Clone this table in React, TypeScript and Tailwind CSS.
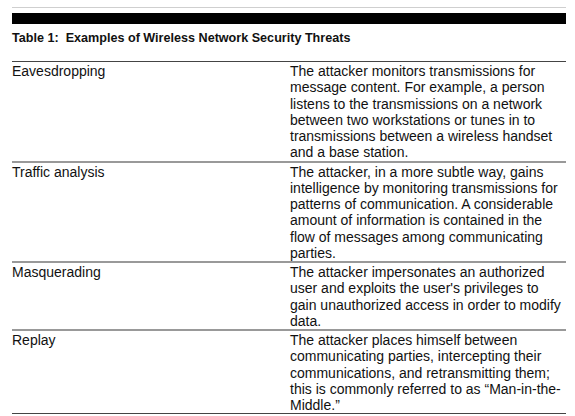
import React from "react";

const rows: { term: string; desc: string }[] = [
  {
    term: "Eavesdropping",
    desc: "The attacker monitors transmissions for message content. For example, a person listens to the transmissions on a network between two workstations or tunes in to transmissions between a wireless handset and a base station.",
  },
  {
    term: "Traffic analysis",
    desc: "The attacker, in a more subtle way, gains intelligence by monitoring transmissions for patterns of communication. A considerable amount of information is contained in the flow of messages among communicating parties.",
  },
  {
    term: "Masquerading",
    desc: "The attacker impersonates an authorized user and exploits the user's privileges to gain unauthorized access in order to modify data.",
  },
  {
    term: "Replay",
    desc: "The attacker places himself between communicating parties, intercepting their communications, and retransmitting them; this is commonly referred to as \u201cMan-in-the-Middle.\u201d",
  },
];

export default function App() {
  return (
    <div
      className="w-[575px] h-[416px] bg-white pl-[12px] pr-[9px] pt-[7px] text-[#111] overflow-hidden"
      style={{ fontFamily: '"Liberation Sans", Arial, sans-serif' }}
    >
      <div className="h-px bg-[#cfcfcf]" />
      <div className="mt-[5px] h-[11px] bg-black" />
      <div className="mt-[6px] mb-[15px] font-bold text-[12.6px] leading-[16px] whitespace-pre">
        {"Table 1:  Examples of Wireless Network Security Threats"}
      </div>
      <div className="border-t border-[#444]">
        {rows.map((r, i) => (
          <div
            key={r.term}
            className={
              "grid grid-cols-[278px_276px] text-[14px] leading-[16.25px] pt-[1px] " +
              (i < rows.length - 1 ? "border-b-2 border-[#999]" : "border-b border-[#444]")
            }
          >
            <div>{r.term}</div>
            <div>{r.desc}</div>
          </div>
        ))}
      </div>
    </div>
  );
}
